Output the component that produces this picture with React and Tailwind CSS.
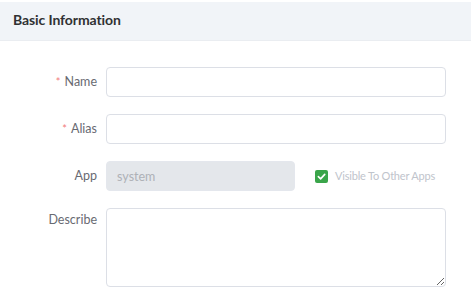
export default function App() {
  return (
    <div className="w-[474px] h-[301px] bg-white pt-[2px] font-['Segoe_UI','Lato',sans-serif] overflow-hidden">
      <div className="w-[471px] h-[39px] bg-[#f1f4f8] border-b border-[#eaedf1] flex items-center px-[13px] pb-[4px]">
        <h2 className="text-[14px] font-bold text-[#303133] tracking-[-0.1px]">Basic Information</h2>
      </div>

      <div className="pt-[26px] flex flex-col gap-[17px]">
        <div className="flex items-center">
          <label className="w-[106px] pr-[9px] text-right text-[12.5px] text-[#686a72]">
            <span className="text-[#f27b7b] text-[11px] mr-[4px]">*</span>Name
          </label>
          <input className="w-[340px] h-[30px] rounded-[4px] border border-[#dcdfe6] bg-white outline-none" />
        </div>

        <div className="flex items-center">
          <label className="w-[106px] pr-[9px] text-right text-[12.5px] text-[#686a72]">
            <span className="text-[#f27b7b] text-[11px] mr-[4px]">*</span>Alias
          </label>
          <input className="w-[340px] h-[30px] rounded-[4px] border border-[#dcdfe6] bg-white outline-none" />
        </div>

        <div className="flex items-center">
          <label className="w-[106px] pr-[9px] text-right text-[12.5px] text-[#686a72]">App</label>
          <input
            disabled
            value="system"
            readOnly
            className="w-[189px] h-[30px] rounded-[4px] border border-[#e4e7ed] bg-[#e4e7eb] px-[10px] text-[12.5px] text-[#aeb1b7] outline-none"
          />
          <label className="ml-[20px] flex items-center gap-[7px] text-[11px] tracking-[-0.2px] text-[#c0c4cc]">
            <span className="w-[13px] h-[13px] rounded-[2px] bg-[#3aa54a] flex items-center justify-center">
              <svg width="9" height="9" viewBox="0 0 10 10" fill="none">
                <path d="M1.5 5.2 L4 7.6 L8.6 2.6" stroke="white" strokeWidth="1.8" strokeLinecap="round" strokeLinejoin="round" />
              </svg>
            </span>
            Visible To Other Apps
          </label>
        </div>

        <div className="flex items-start">
          <label className="w-[106px] pr-[9px] pt-[3px] text-right text-[12.5px] text-[#686a72]">Describe</label>
          <textarea className="w-[340px] h-[79px] rounded-[4px] border border-[#dcdfe6] bg-white outline-none" />
        </div>
      </div>
    </div>
  );
}
